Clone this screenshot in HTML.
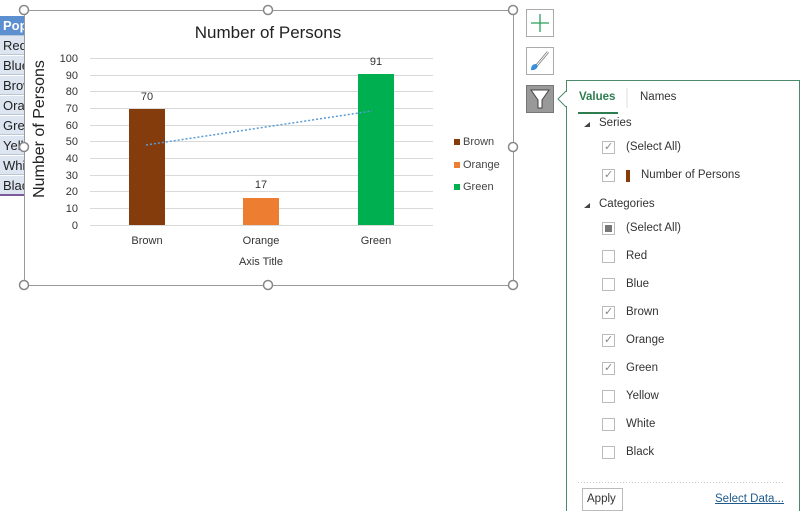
<!DOCTYPE html><html><head><meta charset="utf-8"><style>
body{margin:0;width:805px;height:511px;background:#fff;overflow:hidden;position:relative;font-family:"Liberation Sans",sans-serif;}
.cell{position:absolute;left:0;width:24px;height:19px;background:#dde5f0;border-bottom:1px solid #b9c6d8;font-size:13px;color:#222;line-height:19px;padding-left:3px;box-sizing:border-box;overflow:hidden;white-space:nowrap}
.p{position:absolute;font-size:11.5px;color:#333}
.cb{position:absolute;width:11px;height:11px;border:1px solid #bbb;background:#fff}
.ck{position:absolute;left:1px;top:-2px;font-size:11px;color:#888}
</style></head><body>
<div class="cell" style="top:16px;height:20px;background:#5b8fd0;color:#fff;font-weight:bold">Pop</div>
<div class="cell" style="top:36px">Red</div>
<div class="cell" style="top:56px">Blue</div>
<div class="cell" style="top:76px">Brown</div>
<div class="cell" style="top:96px">Orange</div>
<div class="cell" style="top:116px">Green</div>
<div class="cell" style="top:136px">Yellow</div>
<div class="cell" style="top:156px">White</div>
<div class="cell" style="top:176px">Black</div>
<div style="position:absolute;left:0;top:194px;width:24px;height:2px;background:#7a5a9a"></div>
<svg width="805" height="511" style="position:absolute;left:0;top:0" font-family="Liberation Sans, sans-serif">
<rect x="24.5" y="10.5" width="489" height="275" fill="#fff" stroke="#999"/>
<text x="268" y="38" font-size="17" text-anchor="middle" fill="#222">Number of Persons</text>
<g stroke="#d9d9d9">
<line x1="90" x2="433" y1="58.5" y2="58.5"/><line x1="90" x2="433" y1="75.5" y2="75.5"/><line x1="90" x2="433" y1="91.5" y2="91.5"/><line x1="90" x2="433" y1="108.5" y2="108.5"/><line x1="90" x2="433" y1="125.5" y2="125.5"/><line x1="90" x2="433" y1="141.5" y2="141.5"/><line x1="90" x2="433" y1="158.5" y2="158.5"/><line x1="90" x2="433" y1="175.5" y2="175.5"/><line x1="90" x2="433" y1="191.5" y2="191.5"/><line x1="90" x2="433" y1="208.5" y2="208.5"/><line x1="90" x2="433" y1="225.5" y2="225.5"/>
</g>
<g font-size="11" fill="#333" text-anchor="end">
<text x="78" y="62">100</text><text x="78" y="79">90</text><text x="78" y="95">80</text><text x="78" y="112">70</text><text x="78" y="129">60</text><text x="78" y="145">50</text><text x="78" y="162">40</text><text x="78" y="179">30</text><text x="78" y="195">20</text><text x="78" y="212">10</text><text x="78" y="229">0</text>
</g>
<text transform="translate(44,129) rotate(-90)" font-size="16" text-anchor="middle" fill="#222">Number of Persons</text>
<rect x="129" y="109" width="36" height="116" fill="#843c0c"/>
<rect x="243" y="198" width="36" height="27" fill="#ed7d31"/>
<rect x="358" y="74" width="36" height="151" fill="#00b050"/>
<line x1="146" y1="145" x2="372" y2="111" stroke="#5b9bd5" stroke-width="1.5" stroke-dasharray="2,2"/>
<g font-size="11" fill="#333" text-anchor="middle">
<text x="147" y="100">70</text><text x="261" y="188">17</text><text x="376" y="65">91</text>
<text x="147" y="244">Brown</text><text x="261" y="244">Orange</text><text x="376" y="244">Green</text>
<text x="261" y="265">Axis Title</text>
</g>
<rect x="454" y="139" width="6" height="6" fill="#843c0c"/><text x="463" y="145" font-size="11" fill="#444">Brown</text>
<rect x="454" y="162" width="6" height="6" fill="#ed7d31"/><text x="463" y="168" font-size="11" fill="#444">Orange</text>
<rect x="454" y="184" width="6" height="6" fill="#00b050"/><text x="463" y="190" font-size="11" fill="#444">Green</text>
<g fill="#fff" stroke="#888" stroke-width="1.5">
<circle cx="24" cy="10" r="4.5"/><circle cx="268" cy="10" r="4.5"/><circle cx="513" cy="10" r="4.5"/>
<circle cx="24" cy="147" r="4.5"/><circle cx="513" cy="147" r="4.5"/>
<circle cx="24" cy="285" r="4.5"/><circle cx="268" cy="285" r="4.5"/><circle cx="513" cy="285" r="4.5"/>
</g>
<rect x="526.5" y="9.5" width="27" height="27" fill="#fff" stroke="#aaa"/>
<path d="M540 14V32M531 23H549" stroke="#2a9d5a" stroke-width="1.3"/>
<rect x="526.5" y="47.5" width="27" height="27" fill="#fff" stroke="#aaa"/>
<path d="M548 52L537 65" stroke="#666" stroke-width="2.5"/><path d="M548 52L537 65" stroke="#fff" stroke-width="1"/>
<path d="M531 70Q531 64 536 64L538 66Q536 71 531 70Z" fill="#3a8fd8"/>
<rect x="526.5" y="85.5" width="27" height="27" fill="#999" stroke="#777"/>
<path d="M531 90H549L542 100V108H538V100Z" fill="#fff" stroke="#444"/>
<rect x="566.5" y="80.5" width="233" height="440" fill="#fff" stroke="#4d8a6a"/>
<path d="M566 91L558 99L566 107" fill="#fff" stroke="#4d8a6a"/>
<line x1="567" y1="92" x2="567" y2="106" stroke="#fff" stroke-width="2"/>
<line x1="627" y1="88" x2="627" y2="108" stroke="#ddd"/>
<rect x="578" y="112" width="40" height="2" fill="#2e7d4f"/>
<line x1="578" y1="482.5" x2="785" y2="482.5" stroke="#ccc" stroke-dasharray="1,2"/>
<path d="M584 127L590 122V127Z" fill="#444"/><path d="M584 208L590 203V208Z" fill="#444"/>
<rect x="626" y="170" width="4" height="12" fill="#843c0c"/>
<rect x="582.5" y="488.5" width="40" height="22" fill="#fff" stroke="#bbb"/>
</svg>
<div class="p" style="left:579px;top:91px;color:#2e7d4f;font-weight:bold">Values</div>
<div class="p" style="left:640px;top:91px">Names</div>
<div class="p" style="left:599px;top:117px">Series</div>
<div class="p" style="left:599px;top:198px">Categories</div>
<div class="cb" style="left:602px;top:141px"><span class="ck">✓</span></div><div class="p" style="left:626px;top:141px">(Select All)</div>
<div class="cb" style="left:602px;top:169px"><span class="ck">✓</span></div><div class="p" style="left:641px;top:169px">Number of Persons</div>
<div class="cb" style="left:602px;top:222px"><div style="position:absolute;left:2px;top:2px;width:7px;height:7px;background:#777"></div></div><div class="p" style="left:626px;top:222px">(Select All)</div>
<div class="cb" style="left:602px;top:250px"></div><div class="p" style="left:626px;top:250px">Red</div>
<div class="cb" style="left:602px;top:278px"></div><div class="p" style="left:626px;top:278px">Blue</div>
<div class="cb" style="left:602px;top:306px"><span class="ck">✓</span></div><div class="p" style="left:626px;top:306px">Brown</div>
<div class="cb" style="left:602px;top:334px"><span class="ck">✓</span></div><div class="p" style="left:626px;top:334px">Orange</div>
<div class="cb" style="left:602px;top:362px"><span class="ck">✓</span></div><div class="p" style="left:626px;top:362px">Green</div>
<div class="cb" style="left:602px;top:390px"></div><div class="p" style="left:626px;top:390px">Yellow</div>
<div class="cb" style="left:602px;top:418px"></div><div class="p" style="left:626px;top:418px">White</div>
<div class="cb" style="left:602px;top:446px"></div><div class="p" style="left:626px;top:446px">Black</div>
<div class="p" style="left:587px;top:493px">Apply</div>
<div class="p" style="left:715px;top:493px;color:#1e5a8a;text-decoration:underline">Select Data...</div>
</body></html>
